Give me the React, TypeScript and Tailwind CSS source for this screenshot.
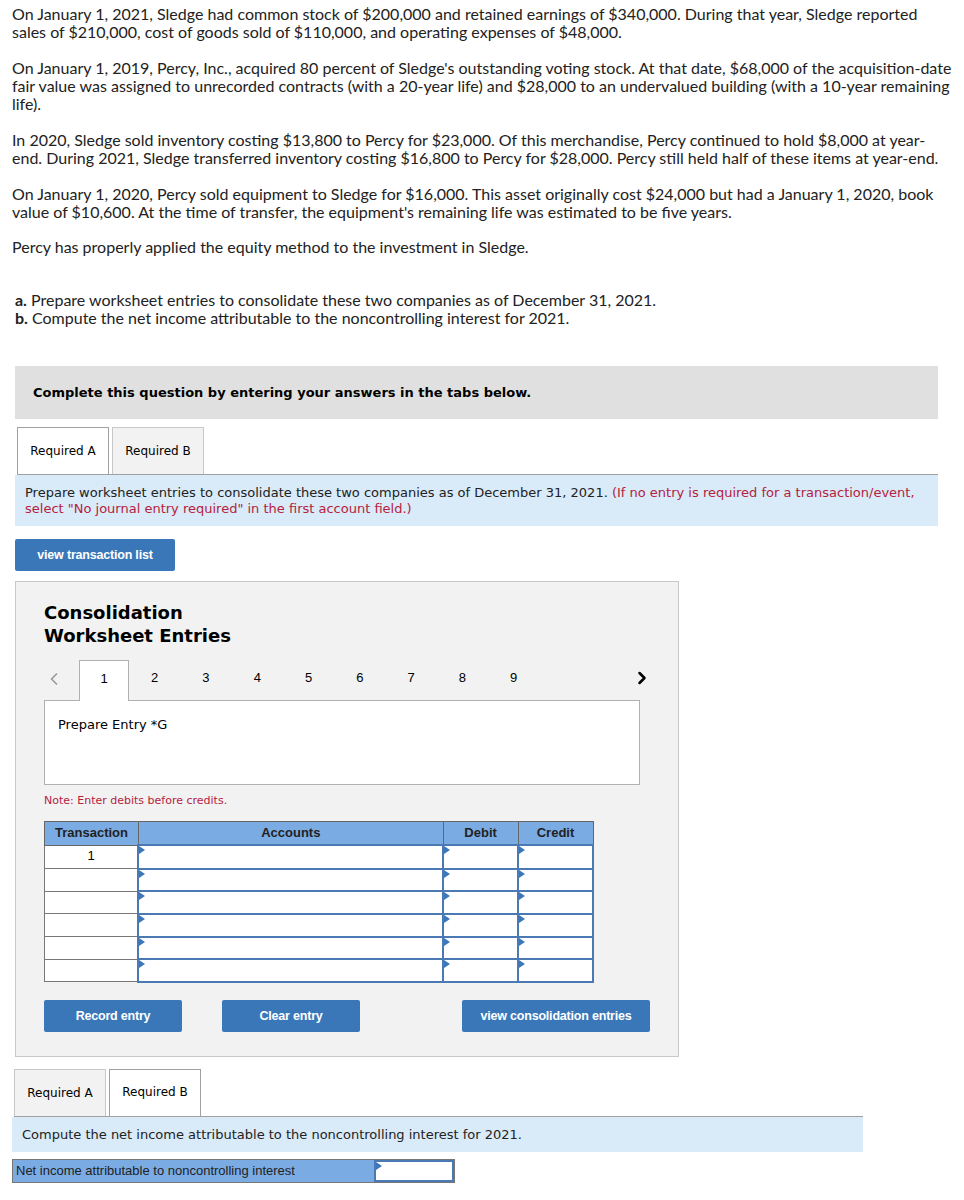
import { ChevronLeft, ChevronRight } from "lucide-react";

const body = "font-['Lato',sans-serif]";
const verdana = "font-['DejaVu_Sans','Verdana',sans-serif]";
const arial = "font-['Liberation_Sans','Arial',sans-serif]";

const rows = [1, 2, 3, 4, 5, 6];

function Marker() {
  // small blue flag shown in the corner of each entry cell
  return (
    <span className="absolute left-0 top-0 h-0 w-0 border-y-[4px] border-l-[6px] border-y-transparent border-l-[#3b77bd]" />
  );
}

function EntryCell({ className = "" }: { className?: string }) {
  return (
    <td className={`relative border-2 border-[#4a79b3] bg-white p-0 ${className}`}>
      <Marker />
    </td>
  );
}

function Tabs({ active }: { active: "A" | "B" }) {
  const tab = (label: string, on: boolean) => (
    <div
      className={`flex h-[47px] w-[92px] items-center justify-center border border-b-0 text-[12px] text-black ${
        on ? "border-[#a0a0a0] bg-white -mb-px pb-px" : "border-[#c8c8c8] bg-[#f2f2f2]"
      }`}
    >
      {label}
    </div>
  );
  return (
    <div className={`flex gap-[3px] border-b border-[#a0a0a0] ${verdana}`}>
      {tab("Required A", active === "A")}
      {tab("Required B", active === "B")}
    </div>
  );
}

export default function App() {
  return (
    <div className="min-h-[1200px] w-[964px] bg-white text-[#222]">
      <div className={`pl-3 pr-3 pt-[5px] text-[16px] leading-[18px] ${body}`}>
        <p className="w-[940px]">
          On January 1, 2021, Sledge had common stock of $200,000 and retained earnings of $340,000. During that year, Sledge reported sales of $210,000, cost of goods sold of $110,000, and operating expenses of $48,000.
        </p>
        <p className="mt-[18px] w-[940px]">
          On January 1, 2019, Percy, Inc., acquired 80 percent of Sledge's outstanding voting stock. At that date, $68,000 of the acquisition-date fair value was assigned to unrecorded contracts (with a 20-year life) and $28,000 to an undervalued building (with a 10-year remaining life).
        </p>
        <p className="mt-[18px] w-[940px]">
          In 2020, Sledge sold inventory costing $13,800 to Percy for $23,000. Of this merchandise, Percy continued to hold $8,000 at year-end. During 2021, Sledge transferred inventory costing $16,800 to Percy for $28,000. Percy still held half of these items at year-end.
        </p>
        <p className="mt-[18px] w-[940px]">
          On January 1, 2020, Percy sold equipment to Sledge for $16,000. This asset originally cost $24,000 but had a January 1, 2020, book value of $10,600. At the time of transfer, the equipment's remaining life was estimated to be five years.
        </p>
        <p className="mt-[17px]">Percy has properly applied the equity method to the investment in Sledge.</p>
        <div className="mt-[35px] pl-[3px]">
          <p>
            <span className="font-bold">a.</span> Prepare worksheet entries to consolidate these two companies as of December 31, 2021.
          </p>
          <p>
            <span className="font-bold">b.</span> Compute the net income attributable to the noncontrolling interest for 2021.
          </p>
        </div>
      </div>

      <div className="mt-[39px] ml-[15px] w-[923px]">
        <div className={`flex h-[53px] items-center bg-[#e0e0e0] pl-[18px] text-[13px] font-bold text-black ${verdana}`}>
          Complete this question by entering your answers in the tabs below.
        </div>

        <div className="mt-2 pl-[2px]">
          <Tabs active="A" />
        </div>
        <div className={`bg-[#d9eaf8] px-[10px] pb-[9px] pt-[10px] text-[13px] leading-[16px] ${verdana}`}>
          Prepare worksheet entries to consolidate these two companies as of December 31, 2021.{" "}
          <span className="text-[#b5223e]">
            (If no entry is required for a transaction/event, select "No journal entry required" in the first account field.)
          </span>
        </div>

        <button
          className={`mt-[13px] flex h-[32px] w-[160px] items-center justify-center rounded-[2px] bg-[#3a77b9] text-[12.5px] font-bold tracking-[-0.2px] text-white ${arial}`}
        >
          view transaction list
        </button>

        {/* worksheet panel */}
        <div className="mt-[10px] w-[664px] border border-[#c8c8c8] bg-[#f2f2f2] pb-6 pl-[28px] pt-[19px]">
          <h2 className={`text-[18px] font-bold leading-[23px] text-black ${verdana}`}>
            Consolidation
            <br />
            Worksheet Entries
          </h2>

          <div className="mt-[12px] w-[596px]">
            <div className={`flex h-[41px] w-[608px] items-end text-[13px] text-black ${arial}`}>
              <div className="flex h-[40px] w-[35px] items-center justify-start pb-[2px] text-[#999]">
                <ChevronLeft size={20} strokeWidth={2} />
              </div>
              <div className="relative -mb-px flex h-[41px] w-[50px] items-center justify-center border border-b-0 border-[#b0b0b0] bg-white pb-[4px]">
                1
              </div>
              {[2, 3, 4, 5, 6, 7, 8, 9].map((n) => (
                <div key={n} className="flex h-[40px] w-[51.3px] items-center justify-center pb-[5px]">
                  {n}
                </div>
              ))}
              <div className="ml-auto flex h-[40px] w-[20px] items-center justify-center pb-[5px] text-black">
                <ChevronRight size={20} strokeWidth={3} />
              </div>
            </div>
            <div className={`h-[85px] border border-[#b0b0b0] bg-white pl-[13px] pt-[14px] text-[13px] text-black ${verdana}`}>
              Prepare Entry *G
            </div>
          </div>

          <p className={`mt-[8px] text-[11px] text-[#b5223e] ${verdana}`}>Note: Enter debits before credits.</p>

          <table className={`mt-[11px] w-[550px] border-collapse text-[13px] ${arial}`}>
            <thead>
              <tr className="h-[24px] bg-[#7aabe3] text-[#222]">
                <th className="w-[94px] border border-[#666] font-semibold">Transaction</th>
                <th className="w-[305px] border border-[#666] font-semibold">Accounts</th>
                <th className="w-[75px] border border-[#666] font-semibold">Debit</th>
                <th className="w-[75px] border border-[#666] font-semibold">Credit</th>
              </tr>
            </thead>
            <tbody>
              {rows.map((r) => (
                <tr key={r} className="h-[22.7px]">
                  <td className="border border-[#777] bg-white pb-[3px] text-center align-top text-black">
                    {r === 1 ? "1" : ""}
                  </td>
                  <EntryCell />
                  <EntryCell />
                  <EntryCell />
                </tr>
              ))}
            </tbody>
          </table>

          <div className={`mt-[17px] flex text-[12.5px] font-bold tracking-[-0.2px] text-white ${arial}`}>
            <button className="h-[32px] w-[138px] rounded-[2px] bg-[#3a77b9]">Record entry</button>
            <button className="ml-[40px] h-[32px] w-[138px] rounded-[2px] bg-[#3a77b9]">Clear entry</button>
            <button className="ml-[102px] h-[32px] w-[188px] rounded-[2px] bg-[#3a77b9]">view consolidation entries</button>
          </div>
        </div>
      </div>

      <div className="mt-[12px] ml-[12px] w-[851px]">
        <div className="pl-[2px]">
          <Tabs active="B" />
        </div>
        <div className={`flex h-[35px] items-center bg-[#d9eaf8] pl-[10px] text-[13px] text-[#222] ${verdana}`}>
          Compute the net income attributable to the noncontrolling interest for 2021.
        </div>
        <div className={`mt-[7px] flex h-[24px] w-[443px] border border-[#777] text-[13px] ${arial}`}>
          <div className="flex w-[361px] items-center bg-[#7aabe3] pl-[3px] text-[#222]">
            Net income attributable to noncontrolling interest
          </div>
          <div className="relative flex-1 border-2 border-[#4a79b3] bg-white">
            <Marker />
          </div>
        </div>
      </div>
    </div>
  );
}
